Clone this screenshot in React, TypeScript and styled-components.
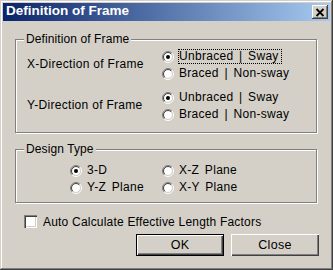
import React from "react";
import styled, { createGlobalStyle } from "styled-components";

const Global = createGlobalStyle`
  html, body { margin: 0; padding: 0; background: #d4d0c8; }
  body { font-family: "Liberation Sans", Arial, sans-serif; font-size: 12px; color: #000; }
  * { box-sizing: border-box; }
`;

const Window = styled.div`
  width: 333px;
  height: 270px;
  background: #d4d0c8;
  padding: 3px;
  display: flex;
  flex-direction: column;
  box-shadow: inset -1px -1px 0 #404040, inset 1px 1px 0 #d4d0c8,
    inset -2px -2px 0 #808080, inset 2px 2px 0 #ffffff;
`;

const TitleBar = styled.div`
  height: 18px;
  flex: none;
  display: flex;
  align-items: flex-start;
  padding: 0 2px 0 3px;
  background: linear-gradient(to right, #0a246a 0%, #a6caf0 100%);
`;

const TitleText = styled.div`
  flex: 1;
  color: #fff;
  font-weight: bold;
  font-size: 13.5px;
  line-height: 15px;
  white-space: nowrap;
`;

const CaptionButton = styled.div`
  width: 16px;
  height: 14px;
  margin-top: 2px;
  background: #d4d0c8;
  box-shadow: inset -1px -1px 0 #404040, inset 1px 1px 0 #ffffff,
    inset -2px -2px 0 #808080;
  display: flex;
  align-items: center;
  justify-content: center;
`;

const Client = styled.div`
  flex: 1;
  display: flex;
  flex-direction: column;
  padding: 18px 11px 0 12px;
`;

const Group = styled.div<{ $pt: number; $pb: number; $mt?: number }>`
  position: relative;
  width: 302px;
  margin-top: ${(p) => p.$mt ?? 0}px;
  padding: ${(p) => p.$pt}px 0 ${(p) => p.$pb}px 0;
  border: 1px solid #808080;
  box-shadow: inset 1px 1px 0 #ffffff, 1px 1px 0 #ffffff;
`;

const Legend = styled.div`
  position: absolute;
  top: -8px;
  left: 8px;
  padding: 0 2px;
  background: #d4d0c8;
  line-height: 14px;
  letter-spacing: 0.1px;
  white-space: nowrap;
`;

const DirBlock = styled.div<{ $mt?: number }>`
  display: grid;
  grid-template-columns: 135px auto;
  padding-left: 11px;
  margin-top: ${(p) => p.$mt ?? 0}px;
`;

const DirLabel = styled.div`
  align-self: center;
  padding-bottom: 3px;
  letter-spacing: 0.3px;
  white-space: nowrap;
`;

const OptionList = styled.div`
  display: flex;
  flex-direction: column;
`;

const Option = styled.div`
  height: 17px;
  display: flex;
  align-items: center;
  white-space: nowrap;
`;

const OptionText = styled.span<{ $focus?: boolean }>`
  margin-left: 4px;
  padding-right: 2px;
  line-height: 13px;
  letter-spacing: 0.3px;
  word-spacing: 2px;
  border: 1px ${(p) => (p.$focus ? "dotted #000" : "solid transparent")};
`;

const TypeGrid = styled.div`
  display: grid;
  grid-template-columns: 92px auto;
  padding-left: 54px;
`;

const CheckRow = styled.div`
  display: flex;
  align-items: center;
  margin: 12px 0 0 9px;
  height: 13px;
  white-space: nowrap;
`;

const CheckBox = styled.div`
  width: 13px;
  height: 13px;
  background: #fff;
  flex: none;
  box-shadow: inset 1px 1px 0 #808080, inset 2px 2px 0 #404040,
    inset -1px -1px 0 #ffffff, inset -2px -2px 0 #d4d0c8;
`;

const CheckText = styled.span`
  margin-left: 6px;
  line-height: 14px;
  letter-spacing: 0.2px;
`;

const ButtonRow = styled.div`
  display: flex;
  justify-content: flex-end;
  gap: 7px;
  margin-top: 6px;
`;

const Button = styled.div<{ $default?: boolean }>`
  width: 88px;
  height: 22px;
  display: flex;
  align-items: center;
  justify-content: center;
  font-size: 12.5px;
  letter-spacing: 0.3px;
  background: #d4d0c8;
  border: ${(p) => (p.$default ? "1px solid #000" : "none")};
  box-shadow: inset 1px 1px 0 #ffffff, inset -1px -1px 0 #404040,
    inset -2px -2px 0 #808080;
`;

const RadioSvg = styled.svg`
  flex: none;
  display: block;
`;

function Radio({ checked }: { checked?: boolean }) {
  const arc = (r: number) => {
    const d = r * Math.SQRT1_2;
    return {
      tl: `M ${6 - d} ${6 + d} A ${r} ${r} 0 0 1 ${6 + d} ${6 - d}`,
      br: `M ${6 + d} ${6 - d} A ${r} ${r} 0 0 1 ${6 - d} ${6 + d}`,
    };
  };
  const o = arc(5.5);
  const i = arc(4.5);
  return (
    <RadioSvg width="12" height="12" viewBox="0 0 12 12">
      <circle cx="6" cy="6" r="4.2" fill="#fff" />
      <path d={o.tl} stroke="#808080" strokeWidth="1" fill="none" />
      <path d={o.br} stroke="#ffffff" strokeWidth="1" fill="none" />
      <path d={i.tl} stroke="#404040" strokeWidth="1" fill="none" />
      <path d={i.br} stroke="#d4d0c8" strokeWidth="1" fill="none" />
      {checked && <circle cx="6" cy="6" r="2" fill="#000" />}
    </RadioSvg>
  );
}

function RadioOption({
  label,
  checked,
  focus,
}: {
  label: string;
  checked?: boolean;
  focus?: boolean;
}) {
  return (
    <Option>
      <Radio checked={checked} />
      <OptionText $focus={focus}>{label}</OptionText>
    </Option>
  );
}

export default function App() {
  return (
    <>
      <Global />
      <Window>
        <TitleBar>
          <TitleText>Definition of Frame</TitleText>
          <CaptionButton>
            <svg width="10" height="9" viewBox="0 0 10 9">
              <path d="M1.5 1 L8.5 8 M8.5 1 L1.5 8" stroke="#000" strokeWidth="1.8" fill="none" />
            </svg>
          </CaptionButton>
        </TitleBar>
        <Client>
          <Group $pt={8} $pb={9}>
            <Legend>Definition of Frame</Legend>
            <DirBlock>
              <DirLabel>X-Direction of Frame</DirLabel>
              <OptionList>
                <RadioOption label="Unbraced | Sway" checked focus />
                <RadioOption label="Braced | Non-sway" />
              </OptionList>
            </DirBlock>
            <DirBlock $mt={7}>
              <DirLabel>Y-Direction of Frame</DirLabel>
              <OptionList>
                <RadioOption label="Unbraced | Sway" checked />
                <RadioOption label="Braced | Non-sway" />
              </OptionList>
            </DirBlock>
          </Group>
          <Group $pt={12} $pb={6} $mt={16}>
            <Legend>Design Type</Legend>
            <TypeGrid>
              <RadioOption label="3-D" checked />
              <RadioOption label="X-Z Plane" />
              <RadioOption label="Y-Z Plane" />
              <RadioOption label="X-Y Plane" />
            </TypeGrid>
          </Group>
          <CheckRow>
            <CheckBox />
            <CheckText>Auto Calculate Effective Length Factors</CheckText>
          </CheckRow>
          <ButtonRow>
            <Button $default>OK</Button>
            <Button>Close</Button>
          </ButtonRow>
        </Client>
      </Window>
    </>
  );
}
